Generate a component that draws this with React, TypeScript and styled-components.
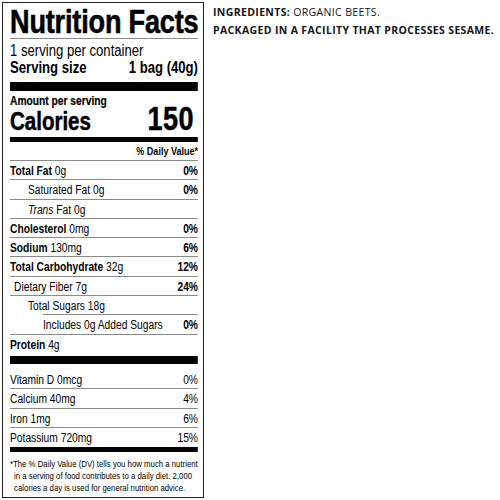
import styled, { createGlobalStyle } from 'styled-components';

// the label face is a condensed grotesque; we squeeze Liberation Sans to Arial Narrow width
const SQUEEZE = 0.82;

const GlobalStyle = createGlobalStyle`
  body {
    margin: 0;
    background: #fff;
  }
`;

const Page = styled.div`
  display: flex;
  align-items: flex-start;
  gap: 9px;
  padding: 2px;
`;

const LabelFrame = styled.section`
  width: 202px;
  box-sizing: border-box;
  border: 1px solid #222;
  padding: 3px 5px 4px 7px;
`;

const LabelBody = styled.div`
  width: ${188 / SQUEEZE}px;
  transform: scaleX(${SQUEEZE});
  transform-origin: left top;
  font-family: 'Liberation Sans', Arial, sans-serif;
  color: #000;
`;

const Title = styled.h1`
  margin: 0;
  font-size: 33px;
  line-height: 32px;
  font-weight: 700;
  letter-spacing: -0.2px;
  white-space: nowrap;
  -webkit-text-stroke: 0.6px #000;
  border-bottom: 1px solid #8a8a8a;
`;

const ServingLine = styled.div<{ $bold?: boolean }>`
  display: flex;
  justify-content: space-between;
  font-size: 16px;
  line-height: 17px;
  font-weight: ${(p) => (p.$bold ? 700 : 400)};
  white-space: nowrap;
  &:first-of-type {
    margin-top: 3px;
  }
`;

const Bar = styled.div<{ $h: number; $top?: number }>`
  height: ${(p) => p.$h}px;
  margin-top: ${(p) => p.$top ?? 0}px;
  background: #000;
`;

const AmountPer = styled.div`
  margin-top: 3px;
  font-size: 12.5px;
  line-height: 14px;
  font-weight: 700;
  -webkit-text-stroke: 0.2px #000;
`;

const CaloriesRow = styled.div`
  display: flex;
  justify-content: space-between;
  align-items: baseline;
  margin-top: 2px;
  height: 27px;
  font-weight: 700;
  -webkit-text-stroke: 0.5px #000;
`;

const CaloriesWord = styled.span`
  font-size: 25px;
  line-height: 20px;
`;

const CaloriesValue = styled.span`
  margin-right: ${4 / SQUEEZE}px;
  font-size: 33px;
  line-height: 17.3px;
  letter-spacing: 0.5px;
`;

const DvHead = styled.div`
  padding-top: 1px;
  text-align: right;
  font-size: 11px;
  line-height: 17px;
  font-weight: 700;
  border-bottom: 1px solid #8a8a8a;
`;

const Row = styled.div<{ $indent?: number; $lineInset?: number; $noLine?: boolean; $padTop?: number }>`
  display: flex;
  justify-content: space-between;
  align-items: baseline;
  margin-left: ${(p) => (p.$lineInset ?? 0) / SQUEEZE}px;
  padding-left: ${(p) => (p.$indent ?? 0) / SQUEEZE}px;
  padding-top: ${(p) => p.$padTop ?? 2}px;
  border-top: ${(p) => (p.$noLine ? 'none' : '1px solid #8a8a8a')};
  font-size: 12.5px;
  line-height: 16.3px;
  white-space: nowrap;
`;

const Name = styled.b`
  font-weight: 700;
`;

const Dv = styled.span<{ $bold?: boolean }>`
  font-weight: ${(p) => (p.$bold ? 700 : 400)};
`;

const Footnote = styled.p`
  margin: 6px 0 0;
  padding-left: 5px;
  text-indent: -5px;
  font-size: 9.5px;
  line-height: 11.7px;
  white-space: nowrap;
`;

const Side = styled.div`
  margin-top: 1px;
  font-family: 'Open Sans', sans-serif;
  font-size: 10.5px;
  line-height: 18px;
  letter-spacing: 0.35px;
  color: #151515;
`;

const SideLine = styled.div<{ $bold?: boolean }>`
  font-weight: ${(p) => (p.$bold ? 700 : 400)};
  white-space: nowrap;
`;

export default function App() {
  return (
    <>
      <GlobalStyle />
      <Page>
        <LabelFrame>
          <LabelBody>
            <Title>Nutrition Facts</Title>
            <ServingLine>1 serving per container</ServingLine>
            <ServingLine $bold>
              <span>Serving size</span>
              <span>1 bag (40g)</span>
            </ServingLine>
            <Bar $h={9} $top={6} />
            <AmountPer>Amount per serving</AmountPer>
            <CaloriesRow>
              <CaloriesWord>Calories</CaloriesWord>
              <CaloriesValue>150</CaloriesValue>
            </CaloriesRow>
            <Bar $h={5} />
            <DvHead>% Daily Value*</DvHead>
            <Row $noLine>
              <span>
                <Name>Total Fat</Name> 0g
              </span>
              <Dv $bold>0%</Dv>
            </Row>
            <Row $indent={18}>
              <span>Saturated Fat 0g</span>
              <Dv $bold>0%</Dv>
            </Row>
            <Row $indent={18}>
              <span>
                <i>Trans</i> Fat 0g
              </span>
            </Row>
            <Row>
              <span>
                <Name>Cholesterol</Name> 0mg
              </span>
              <Dv $bold>0%</Dv>
            </Row>
            <Row>
              <span>
                <Name>Sodium</Name> 130mg
              </span>
              <Dv $bold>6%</Dv>
            </Row>
            <Row>
              <span>
                <Name>Total Carbohydrate</Name> 32g
              </span>
              <Dv $bold>12%</Dv>
            </Row>
            <Row $indent={4}>
              <span>Dietary Fiber 7g</span>
              <Dv $bold>24%</Dv>
            </Row>
            <Row $indent={18}>
              <span>Total Sugars 18g</span>
            </Row>
            <Row $lineInset={33}>
              <span>Includes 0g Added Sugars</span>
              <Dv $bold>0%</Dv>
            </Row>
            <Row>
              <span>
                <Name>Protein</Name> 4g
              </span>
            </Row>
            <Bar $h={8} $top={3} />
            <Row $noLine $padTop={8}>
              <span>Vitamin D 0mcg</span>
              <Dv>0%</Dv>
            </Row>
            <Row>
              <span>Calcium 40mg</span>
              <Dv>4%</Dv>
            </Row>
            <Row>
              <span>Iron 1mg</span>
              <Dv>6%</Dv>
            </Row>
            <Row>
              <span>Potassium 720mg</span>
              <Dv>15%</Dv>
            </Row>
            <Bar $h={5} $top={1} />
            <Footnote>
              *The % Daily Value (DV) tells you how much a nutrient
              <br />
              in a serving of food contributes to a daily diet. 2,000
              <br />
              calories a day is used for general nutrition advice.
            </Footnote>
          </LabelBody>
        </LabelFrame>
        <Side>
          <SideLine>
            <b>INGREDIENTS:</b> ORGANIC BEETS.
          </SideLine>
          <SideLine $bold>PACKAGED IN A FACILITY THAT PROCESSES SESAME.</SideLine>
        </Side>
      </Page>
    </>
  );
}
